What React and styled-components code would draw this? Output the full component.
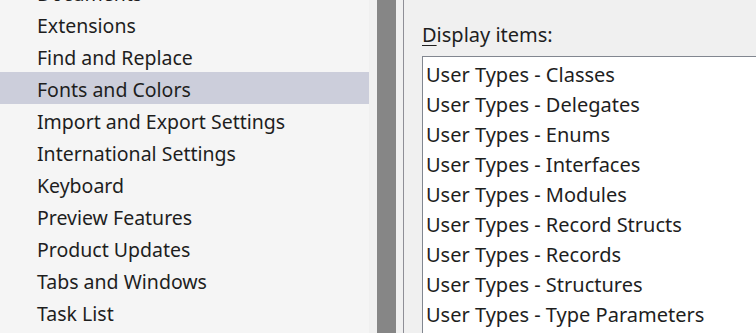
import styled, { createGlobalStyle } from "styled-components";

const GlobalStyle = createGlobalStyle`
  html, body {
    margin: 0;
    padding: 0;
    overflow: hidden;
  }
  body {
    font-family: "Segoe UI", "Noto Sans", sans-serif;
    color: #1e1e1e;
  }
`;

const categories = [
  "Documents",
  "Extensions",
  "Find and Replace",
  "Fonts and Colors",
  "Import and Export Settings",
  "International Settings",
  "Keyboard",
  "Preview Features",
  "Product Updates",
  "Tabs and Windows",
  "Task List",
];

const displayItems = [
  "User Types - Classes",
  "User Types - Delegates",
  "User Types - Enums",
  "User Types - Interfaces",
  "User Types - Modules",
  "User Types - Record Structs",
  "User Types - Records",
  "User Types - Structures",
  "User Types - Type Parameters",
];

export default function App() {
  return (
    <>
      <GlobalStyle />
      <Window>
        <Tree>
          <TreeList>
            {categories.map((c) => (
              <TreeItem key={c} $selected={c === "Fonts and Colors"}>
                {c}
              </TreeItem>
            ))}
          </TreeList>
        </Tree>
        <Splitter>
          <Grip />
        </Splitter>
        <Pane>
          <Label>
            <u>D</u>isplay items:
          </Label>
          <ListBox>
            {displayItems.map((d) => (
              <ListItem key={d}>{d}</ListItem>
            ))}
          </ListBox>
        </Pane>
      </Window>
    </>
  );
}

const Window = styled.div`
  display: flex;
  width: 756px;
  height: 333px;
  overflow: hidden;
  background: #f0f0f0;
`;

const Tree = styled.div`
  width: 369px;
  flex-shrink: 0;
  background: #f5f5f5;
  overflow: hidden;
`;

const TreeList = styled.div`
  display: flex;
  flex-direction: column;
  margin-top: -24px;
`;

const TreeItem = styled.div`
  height: 32px;
  box-sizing: border-box;
  padding: 4px 0 0 37px;
  line-height: 28px;
  font-size: 19.5px;
  white-space: nowrap;
  background: ${({ $selected }) => ($selected ? "#cccedb" : "transparent")};
`;

const Splitter = styled.div`
  width: 35px;
  flex-shrink: 0;
  display: flex;
  padding-left: 8px;
  box-sizing: border-box;
  border-right: 1px solid #8e8e96;
`;

const Grip = styled.div`
  width: 19px;
  background: #868686;
`;

const Pane = styled.div`
  flex: 1;
  display: flex;
  flex-direction: column;
  padding-left: 18px;
  padding-top: 20px;
`;

const Label = styled.div`
  font-size: 20px;
  line-height: 30px;
  height: 36px;
  u {
    text-decoration-thickness: 1px;
    text-underline-offset: 3px;
  }
`;

const ListBox = styled.div`
  flex: 1;
  background: #ffffff;
  border: 1px solid #828790;
  border-right: none;
  border-bottom: none;
  padding: 3px 0 0 3px;
  overflow: hidden;
`;

const ListItem = styled.div`
  height: 30px;
  line-height: 30px;
  font-size: 20px;
  white-space: nowrap;
`;
